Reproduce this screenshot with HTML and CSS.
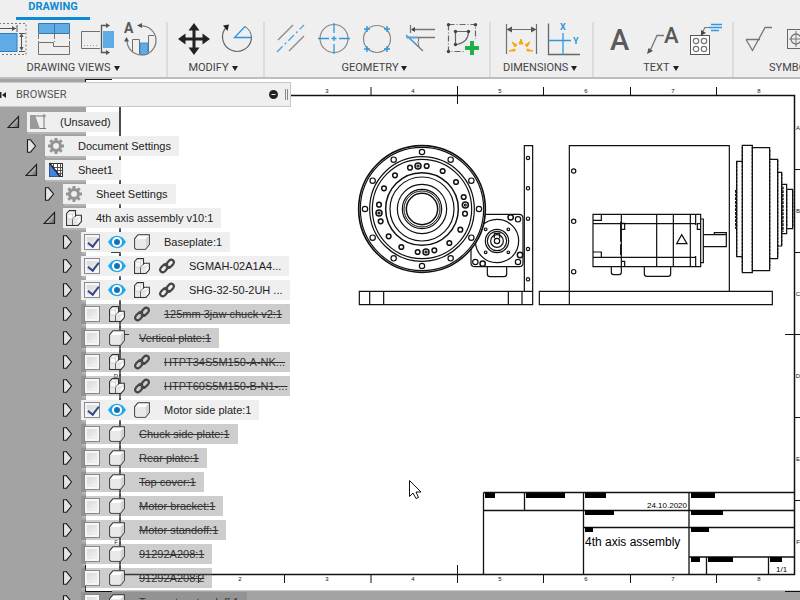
FILE: index.html
```html
<!DOCTYPE html>
<html lang="en">
<head>
<meta charset="utf-8">
<title>4th axis assembly</title>
<link rel="stylesheet" href="styles.css">
</head>
<body>
<svg class="defs" width="0" height="0" aria-hidden="true">
  <defs>
    <linearGradient id="fold" x1="0" y1="0" x2="1" y2="1"><stop offset="0.3" stop-color="#eee"/><stop offset="1" stop-color="#555"/></linearGradient>
    <symbol id="open" viewBox="0 0 14 14"><path d="M11.500 1.500V12.500H1Z" fill="url(#fold)" stroke="#222" stroke-width="1.200"/></symbol>
    <symbol id="closed" viewBox="0 0 14 14"><path d="M2.500 .8H5.500L10.500 7L5.500 13.200H2.500Z" fill="#e4e4e4" stroke="#1a1a1a" stroke-width="1.100"/></symbol>
    <symbol id="body" viewBox="0 0 16 16"><path d="M.7 4.700L4 .7H15.300V10.500L11.500 15.300H2L.7 14Z" fill="#fff" stroke="#333" stroke-width="1.100"/><path d="M1.500 5H11.500V14.600H2L1.500 14Z" fill="#e9e9e9"/><path d="M11.500 5L15 1.300V10.400L11.500 14.800Z" fill="#d0d6d6"/></symbol>
    <symbol id="asm" viewBox="0 0 16 16"><path d="M.6 3.500L3.300 .6H9.500V6L10.500 5.300H15.400V11.500L12 15.400H.6Z" fill="#fbfbfb" stroke="#333" stroke-width="1.100"/><path d="M1.200 9H6V14.800H1.200ZM7 9.500H11.500V14.800H7Z" fill="#e6e6e6"/><path d="M6.500 9V15M6.500 9L9.500 6" fill="none" stroke="#555" stroke-width=".9"/><path d="M1 9H12L15 5.800M6.500 4V9M1 4H6.500L9 1.200" fill="none" stroke="#c4c4c4" stroke-width=".7"/></symbol>
    <symbol id="link" viewBox="0 0 16 16"><g fill="none" stroke="#444" stroke-width="2.200" stroke-linecap="round"><path d="M6.200 7.200L10 2.800Q12 .8 14 2.400Q15.800 4.200 14 6.400L11.500 9Q9.500 10.500 7.800 9"/><path d="M9.800 8.800L6 13.200Q4 15.200 2 13.600Q.2 11.800 2 9.600L4.500 7Q6.500 5.500 8.200 7"/></g></symbol>
    <symbol id="eye" viewBox="0 0 18 14"><path d="M0 7Q4 .8 9 .8T18 7Q14 13.200 9 13.200T0 7Z" fill="#1aa9ea"/><circle cx="9" cy="7" r="5" fill="#fff"/><circle cx="9" cy="7" r="3" fill="#1b6fb8"/></symbol>
    <symbol id="gear" viewBox="0 0 16 16"><circle cx="8" cy="8" r="4.500" fill="none" stroke="#949494" stroke-width="3"/><g stroke="#949494" stroke-width="3"><path d="M8 0V3M8 13V16M0 8H3M13 8H16M2.300 2.300L4.500 4.500M11.500 11.500L13.700 13.700M13.700 2.300L11.500 4.500M4.500 11.500L2.300 13.700"/></g></symbol>
    <symbol id="doc" viewBox="0 0 16 16"><path d="M0 1H5L10 15H0Z" fill="#9a9a9a"/><path d="M5 2H16M14 0V15M10 14.500H16" fill="none" stroke="#777"/></symbol>
    <symbol id="sheet" viewBox="0 0 16 16"><rect x="1.500" y="1.500" width="13" height="13" fill="#fff" stroke="#333"/><path d="M5.500 2V14M9.500 2V14M12.500 2V14M2 5.500H14M2 8.500H14M2 11.500H14" stroke="#555"/><path d="M1.500 1.500L11 14.500H1.500Z" fill="#3f83ea"/><path d="M1.500 1L12 14.500" stroke="#222" stroke-width="1.500"/></symbol>
  </defs>
</svg>

<header class="ribbon">
  <nav class="tabs"><button class="tab">DRAWING</button></nav>
  <div class="groups">
    <section class="group first">
      <div class="tools">
        <button class="tool"><svg viewBox="0 0 32 32"><rect x="-8" y=".5" width="39" height="31" fill="none" stroke="#777" stroke-dasharray="2 2"/><rect x="-4" y="10.500" width="26" height="18" fill="#5fabe6" stroke="#2b7fc0"/><path d="M0 5.500H21M22 2V9M26.500 12V27M24 10.500H30M24 28.500H30" stroke="#555"/><path d="M21 5.500L17 3V8ZM26.500 10L24.500 14H28.500ZM26.500 28L24.500 24H28.500Z" fill="#555"/></svg></button>
        <button class="tool"><svg viewBox="0 0 32 32"><path d="M.5.500H31.500V10.500H.5Z" fill="#5fabe6" stroke="#3a76a6"/><path d="M16.500 0V10" stroke="#3a76a6"/><path d="M.5 11V19M31.500 11V23M16.500 11V19" stroke="#777" stroke-dasharray="5 2"/><path d="M.5 19.500H15.500V23.500H31.500V31.500H.5Z" fill="none" stroke="#707070"/></svg></button>
        <button class="tool"><svg viewBox="0 0 32 32"><path d="M19 8.500H.5V25.500H19" fill="none" stroke="#707070"/><path d="M3 22.500H18" stroke="#999" stroke-dasharray="1 2"/><path d="M26 2.500H20.500V29.500H26" fill="none" stroke="#555" stroke-width="1.300"/><path d="M25 0L29 2.500L25 5ZM25 27L29 29.500L25 32Z" fill="#555"/><rect x="22" y="8" width="11" height="17" fill="#5fabe6"/></svg></button>
        <button class="tool"><svg viewBox="0 0 32 32"><text class="glyph-small" x="0" y="10">A</text><path d="M16 3A14.500 14.500 0 1 1 3 17" fill="none" stroke="#777" stroke-width="1.200"/><path d="M13 2.500L18 0V5ZM2.500 14L0 18.500H5Z" fill="#555"/><path d="M8.500 29V16.500H15.500V31M24.500 29V12.500H30" fill="none" stroke="#707070"/><path d="M16 20H24V31Q20 33 16 31Z" fill="#5fabe6" stroke="#3a76a6" stroke-width=".7"/></svg></button>
      </div>
      <button class="menu">DRAWING VIEWS<i></i></button>
    </section>
    <section class="group">
      <div class="tools">
        <button class="tool"><svg viewBox="0 0 32 32"><path d="M16 3V29M3 16H29" stroke="#222" stroke-width="3"/><path d="M16 0L21.500 7.500H10.500ZM16 32L21.500 24.500H10.500ZM0 16L7.500 10.500V21.500ZM32 16L24.500 10.500V21.500Z" fill="#222"/></svg></button>
        <button class="tool"><svg viewBox="0 0 32 32"><path d="M5 4.500A14.500 14.500 0 1 0 30.500 15" fill="none" stroke="#666" stroke-width="1.200"/><path d="M2 2.500L8 1.500L6.500 8Z" fill="#222"/><path d="M24 3.500L13.500 14.500H30" fill="none" stroke="#2f93dd" stroke-width="1.300"/><path d="M24 3.500A14 14 0 0 1 30.500 15" fill="none" stroke="#666"/></svg></button>
      </div>
      <button class="menu">MODIFY<i></i></button>
    </section>
    <section class="group">
      <div class="tools">
        <button class="tool"><svg viewBox="0 0 32 32"><path d="M3 17L18 2M14 28L29 13" stroke="#8a8a8a" stroke-width="1.400"/><path d="M2 29L29 2" stroke="#4ba6e6" stroke-width="1.400" stroke-dasharray="8 3 2 3"/></svg></button>
        <button class="tool"><svg viewBox="0 0 32 32"><circle cx="16" cy="15.500" r="14" fill="none" stroke="#888" stroke-width="1.200"/><path d="M16 0V10M16 21V31M0 15.500H11M21 15.500H32M16 13V18M13.500 15.500H18.500" stroke="#2f97dd" stroke-width="1.300"/></svg></button>
        <button class="tool"><svg viewBox="0 0 32 32"><circle cx="16" cy="16" r="13.500" fill="none" stroke="#888" stroke-width="1.200"/><path d="M6 3V9M3 6H9M26 3V9M23 6H29M6 23V29M3 26H9M26 23V29M23 26H29" stroke="#2f97dd" stroke-width="1.400"/></svg></button>
        <button class="tool"><svg viewBox="0 0 32 32"><path d="M6.500 2V10M8 6.500H31M3 14.500H31M3 13L19 28" stroke="#777" stroke-width="1.300"/><path d="M7 6.500L11 4V9Z" fill="#444"/><path d="M2 14.500H14M2 12L12 21" stroke="#4ba6e6" stroke-width="1.300"/><path d="M15 15Q13 19 15 24" fill="none" stroke="#777"/></svg></button>
        <button class="tool"><svg viewBox="0 0 32 32"><path d="M1.500 1.500H28.500V16M1.500 1.500V28.500H18" fill="none" stroke="#666" stroke-width="1.200" stroke-dasharray="6 2 1 2"/><path d="M8.500 21V8.500H21.500Q21.500 19 10 21.500" fill="none" stroke="#666" stroke-width="1.200"/><g fill="#444"><circle cx="1.500" cy="1.800" r="1.700"/><circle cx="28.500" cy="1.800" r="1.700"/><circle cx="1.500" cy="28.500" r="1.700"/><circle cx="8.500" cy="8.500" r="1.700"/><circle cx="21.500" cy="8.500" r="1.700"/><circle cx="8.500" cy="21.500" r="1.700"/></g><path d="M25 18V32M18 25H32" stroke="#1eae4b" stroke-width="4"/></svg></button>
      </div>
      <button class="menu">GEOMETRY<i></i></button>
    </section>
    <section class="group wide">
      <div class="tools">
        <button class="tool"><svg viewBox="0 0 32 32"><path d="M1.500 1V31M31.500 1V31M3 6.500H30" stroke="#707070" stroke-width="1.200"/><path d="M1.500 6.500L7 3.500V9.500ZM31.500 6.500L26 3.500V9.500Z" fill="#555"/><path d="M16 16L18 21H14ZM7 19L12 22L10 24ZM25 19L20 22L22 24ZM4 28L10 26V28ZM28 28L22 26V28Z" fill="#fba70c" stroke="#fba70c"/></svg></button>
        <button class="tool"><svg viewBox="0 0 32 32"><path d="M.5.500V31.500H32" fill="none" stroke="#666" stroke-width="1.300"/><path d="M15 10V32M1 17.500H23" stroke="#2f97dd" stroke-width="1.300"/><text class="axis" x="12" y="7">X</text><text class="axis" x="25" y="21">Y</text></svg></button>
      </div>
      <button class="menu">DIMENSIONS<i></i></button>
    </section>
    <section class="group">
      <div class="tools">
        <button class="tool"><svg viewBox="0 0 32 32"><text class="glyph-big" x="6" y="27">A</text></svg></button>
        <button class="tool"><svg viewBox="0 0 32 32"><path d="M3 28L10 12.500H17" fill="none" stroke="#777" stroke-width="1.300"/><path d="M0 31L1.500 25L6 28Z" fill="#555"/><text class="glyph-mid" x="17" y="20">A</text></svg></button>
        <button class="tool"><svg viewBox="0 0 32 32"><rect x=".5" y="12.500" width="19" height="19" fill="#fff" stroke="#555"/><g fill="none" stroke="#777" stroke-width="1.200"><circle cx="6" cy="18" r="2.700"/><circle cx="14" cy="18" r="2.700"/><circle cx="6" cy="26" r="2.700"/><circle cx="14" cy="26" r="2.700"/><path d="M12 10L15 4.500H19"/></g><path d="M11 12.500V7L16 10Z" fill="#444"/><path d="M21 1.500H32M19 4.500H32M21 7.500H29" stroke="#2f97dd" stroke-width="1.300"/></svg></button>
      </div>
      <button class="menu">TEXT<i></i></button>
    </section>
    <section class="group last">
      <div class="tools">
        <button class="tool"><svg viewBox="0 0 32 32"><path d="M2 16.500H16M2 16.500L8.500 27.500L21 4.500H28" fill="none" stroke="#777" stroke-width="1.300"/></svg></button>
        <button class="tool"><svg viewBox="0 0 32 32"><rect x=".5" y="6.500" width="31" height="19" fill="none" stroke="#666"/><circle cx="9" cy="16" r="5" fill="none" stroke="#777" stroke-width="1.300"/><path d="M9 8V24M2 16H16M17.500 7V25" stroke="#777"/></svg></button>
        <button class="tool"><svg viewBox="0 0 32 32"><path d="M4 28V6H28" fill="none" stroke="#777" stroke-width="1.300"/></svg></button>
      </div>
      <button class="menu">SYMBOLS<i></i></button>
    </section>
  </div>
</header>

<main class="workspace">
  <svg class="sheet" width="800" height="521" viewBox="0 79 800 521">
    <rect x="86" y="79" width="714" height="512" fill="#fff"/>
    <path d="M85.500 79V83M85.500 565V591.500H112" class="ln"/>
    <path d="M86 79.500H112M785 591.500H800" class="ln"/>
    <path d="M112 590.500H800" stroke="#ccc"/>
    <path class="frame" d="M120 95.500H794.500V574.500H120Z"/>
    <path class="ln" d="M198.500 87V95M284.500 87V95M371 87V95M457.500 86V104M543.500 87V95M630.500 87V95M716.500 87V95M198.500 575V583M284.500 575V583M371 575V583M457.500 565V583M543.500 575V583M630.500 575V583M716.500 575V583M795 169.500H800M795 252.500H800M785 334.500H800M795 417.500H800M795 500.500H800M111 252.500H120M120 334.500H129M111 169.500H120M111 417.500H120M111 500.500H120"/>
    <g class="zone">
      <text x="327" y="93">3</text><text x="413" y="93">4</text><text x="500" y="93">5</text><text x="586" y="93">6</text><text x="673" y="93">7</text><text x="759" y="93">8</text>
      <text x="240" y="581">2</text><text x="327" y="581">3</text><text x="413" y="581">4</text><text x="500" y="581">5</text><text x="586" y="581">6</text><text x="673" y="581">7</text><text x="759" y="581">8</text>
      <text x="798" y="130">A</text><text x="798" y="213">B</text><text x="798" y="296">C</text><text x="798" y="378">D</text><text x="798" y="461">E</text><text x="798" y="544">F</text>
      <text x="116" y="378">D</text><text x="116" y="544">F</text>
    </g>

    <g class="view" transform="translate(345 130) scale(.33333)">
      <path d="M420 253H522Q534 253 534 265V398Q534 410 522 410H390Q378 410 378 398V345M427 410V432Q427 440 435 440H477Q485 440 485 432V410"/>
      <circle cx="456" cy="333" r="65"/><circle cx="456" cy="333" r="35"/><circle cx="456" cy="333" r="29"/><circle cx="456" cy="333" r="19"/><circle cx="456" cy="333" r="8"/><path d="M448 325V310H464V325"/>
      <circle cx="422" cy="298" r="4"/><circle cx="490" cy="298" r="4"/><circle cx="422" cy="367" r="4"/><circle cx="490" cy="367" r="4"/>
      <circle cx="519" cy="268" r="8"/><circle cx="519" cy="396" r="8"/><circle cx="391" cy="396" r="8"/>
      <g class="bold"><circle cx="497" cy="262" r="8"/><circle cx="525" cy="375" r="8"/><circle cx="413" cy="401" r="8"/></g>
      <circle cx="231" cy="237" r="190" class="disc"/>
      <circle cx="231" cy="237" r="185"/><circle cx="231" cy="237" r="157"/><circle cx="231" cy="237" r="149"/><circle cx="231" cy="237" r="96"/><circle cx="231" cy="237" r="74"/><circle cx="231" cy="237" r="59"/>
      <g class="bold"><circle cx="231" cy="237" r="109"/><circle cx="231" cy="237" r="54" stroke-width="3"/><circle cx="231" cy="237" r="47"/></g>
      <g><circle cx="231" cy="66" r="8"/><circle cx="317" cy="89" r="8"/><circle cx="379" cy="152" r="8"/><circle cx="402" cy="237" r="8"/><circle cx="379" cy="323" r="8"/><circle cx="317" cy="385" r="8"/><circle cx="231" cy="408" r="8"/><circle cx="146" cy="385" r="8"/><circle cx="83" cy="323" r="8"/><circle cx="60" cy="237" r="8"/><circle cx="83" cy="152" r="8"/><circle cx="146" cy="89" r="8"/></g>
      <g class="bold"><circle cx="195" cy="113" r="7"/><circle cx="245" cy="108" r="7"/><circle cx="293" cy="123" r="7"/><circle cx="333" cy="156" r="7"/><circle cx="356" cy="201" r="7"/><circle cx="360" cy="251" r="7"/><circle cx="346" cy="299" r="7"/><circle cx="313" cy="339" r="7"/><circle cx="268" cy="361" r="7"/><circle cx="218" cy="366" r="7"/><circle cx="169" cy="351" r="7"/><circle cx="131" cy="319" r="7"/><circle cx="107" cy="274" r="7"/><circle cx="102" cy="224" r="7"/><circle cx="117" cy="175" r="7"/><circle cx="150" cy="136" r="7"/>
        <circle cx="219" cy="108" r="9"/><circle cx="361" cy="225" r="9"/><circle cx="243" cy="366" r="9"/><circle cx="102" cy="249" r="9"/></g>
      <circle cx="219" cy="108" r="3"/><circle cx="361" cy="225" r="3"/><circle cx="243" cy="366" r="3"/><circle cx="102" cy="249" r="3"/>
      <path d="M538 484V47H563V524H43V484H563M74 484V524M116 484V524M490 484V524M531 484V524"/>
      <circle cx="549" cy="84" r="5"/><circle cx="549" cy="175" r="5"/><circle cx="549" cy="266" r="5"/><circle cx="549" cy="357" r="5"/><circle cx="549" cy="448" r="5"/>
    </g>

    <g class="view" transform="translate(530 130) scale(.33333)">
      <path d="M118 524V47H598V484M28 484H727V524H28Z"/>
      <circle cx="131" cy="123" r="6.500"/><circle cx="131" cy="274" r="6.500"/><circle cx="131" cy="425" r="6.500"/>
      <path d="M189 253H512V410H189ZM189 281H497M189 382H497M274 253V410M380 253V410M430 253V410M481 253V410M497 253V285M497 378V410M189 271H214V254M214 382V366H189M274 280H284V298H274M274 394H284V410M512 281H502V298H512M512 267H520V398H512M520 314H589V350H520M553 314V308H589V314"/>
      <path d="M272 275V375" stroke-dasharray="60 8"/>
      <path d="M455 314L471 341H440ZM244 410V427Q244 434 251 434H267Q274 434 274 427V410M343 410V431Q343 439 351 439H414Q422 439 422 431V410"/>
      <path d="M637 46H667V428H637ZM667 53H719V422H667M719 88H743V386H719M637 94H620V380H637M743 127H755V348H743M757 163H770V311H757M770 178H788V296H770"/>
      <g class="knurl"><path d="M667 50V425M637 50V425M719 60V415M743 90V380M620 96V376M617 180V296M755 130V345M759 170V306M770 182V290M788 182V290"/></g>
    </g>

    <g class="block">
      <path d="M483.500 492.500H794M483.500 492.500V574M483.500 510.500H794M524.500 493V510M583.500 493V574M689 493V574M583.500 527.500H794M689 557H794M706.500 557V574M768.500 557V574"/>
      <path class="redact" d="M485 493h10v5h-10zM526 493h39v5h-39zM585 493h21v5h-21zM691 493h24v5h-24zM585 510h29v5h-29zM691 510h32v5h-32zM585 527h8v5h-8zM691 527h18v5h-18zM691 557h9v5h-9zM708 557h25v5h-25zM770 557h12v5h-12z"/>
      <text class="date" x="687" y="508" text-anchor="end">24.10.2020</text>
      <text class="name" x="585" y="546">4th axis assembly</text>
      <text class="date" x="776" y="572">1/1</text>
    </g>
    <path d="M409.500 480.500V496.500L413 493L416 498.500L418.500 497.500L416 492H421Z" fill="#fff" stroke="#111"/>
  </svg>

  <aside class="browser">
    <div class="head"><svg class="rewind" viewBox="0 0 8 8"><path d="M.7 1V7" stroke="#222" stroke-width="1.500"/><path d="M6 1V7L2 4Z" fill="#222"/></svg><h2>BROWSER</h2><button class="collapse"></button><span class="grip"></span></div>
    <ul class="tree">
      <li class="l0"><button class="twist"><svg><use href="#open"/></svg></button><div class="pill"><svg><use href="#doc"/></svg><span>(Unsaved)</span></div></li>
      <li class="l1"><button class="twist"><svg><use href="#closed"/></svg></button><div class="pill"><svg><use href="#gear"/></svg><span>Document Settings</span></div></li>
      <li class="l1"><button class="twist"><svg><use href="#open"/></svg></button><div class="pill"><svg><use href="#sheet"/></svg><span>Sheet1</span></div></li>
      <li class="l2"><button class="twist"><svg><use href="#closed"/></svg></button><div class="pill"><svg><use href="#gear"/></svg><span>Sheet Settings</span></div></li>
      <li class="l2"><button class="twist"><svg><use href="#open"/></svg></button><div class="pill"><svg><use href="#asm"/></svg><span>4th axis assembly v10:1</span></div></li>
      <li class="l3"><button class="twist"><svg><use href="#closed"/></svg></button><div class="pill"><input type="checkbox" id="c1" checked><svg class="eye"><use href="#eye"/></svg><svg><use href="#body"/></svg><label for="c1">Baseplate:1</label></div></li>
      <li class="l3"><button class="twist"><svg><use href="#closed"/></svg></button><div class="pill"><input type="checkbox" id="c2" checked><svg class="eye"><use href="#eye"/></svg><svg><use href="#asm"/></svg><svg><use href="#link"/></svg><label for="c2">SGMAH-02A1A4...</label></div></li>
      <li class="l3"><button class="twist"><svg><use href="#closed"/></svg></button><div class="pill"><input type="checkbox" id="c3" checked><svg class="eye"><use href="#eye"/></svg><svg><use href="#asm"/></svg><svg><use href="#link"/></svg><label for="c3">SHG-32-50-2UH ...</label></div></li>
      <li class="l3 off"><button class="twist"><svg><use href="#closed"/></svg></button><div class="pill"><input type="checkbox" id="c4"><svg><use href="#asm"/></svg><svg><use href="#link"/></svg><label for="c4">125mm 3jaw chuck v2:1</label></div></li>
      <li class="l3 off"><button class="twist"><svg><use href="#closed"/></svg></button><div class="pill"><input type="checkbox" id="c5"><svg><use href="#body"/></svg><label for="c5">Vertical plate:1</label></div></li>
      <li class="l3 off"><button class="twist"><svg><use href="#closed"/></svg></button><div class="pill"><input type="checkbox" id="c6"><svg><use href="#asm"/></svg><svg><use href="#link"/></svg><label for="c6">HTPT34S5M150-A-NK...</label></div></li>
      <li class="l3 off"><button class="twist"><svg><use href="#closed"/></svg></button><div class="pill"><input type="checkbox" id="c7"><svg><use href="#asm"/></svg><svg><use href="#link"/></svg><label for="c7">HTPT60S5M150-B-N1-...</label></div></li>
      <li class="l3"><button class="twist"><svg><use href="#closed"/></svg></button><div class="pill"><input type="checkbox" id="c8" checked><svg class="eye"><use href="#eye"/></svg><svg><use href="#body"/></svg><label for="c8">Motor side plate:1</label></div></li>
      <li class="l3 off"><button class="twist"><svg><use href="#closed"/></svg></button><div class="pill"><input type="checkbox" id="c9"><svg><use href="#body"/></svg><label for="c9">Chuck side plate:1</label></div></li>
      <li class="l3 off"><button class="twist"><svg><use href="#closed"/></svg></button><div class="pill"><input type="checkbox" id="c10"><svg><use href="#body"/></svg><label for="c10">Rear plate:1</label></div></li>
      <li class="l3 off"><button class="twist"><svg><use href="#closed"/></svg></button><div class="pill"><input type="checkbox" id="c11"><svg><use href="#body"/></svg><label for="c11">Top cover:1</label></div></li>
      <li class="l3 off"><button class="twist"><svg><use href="#closed"/></svg></button><div class="pill"><input type="checkbox" id="c12"><svg><use href="#body"/></svg><label for="c12">Motor bracket:1</label></div></li>
      <li class="l3 off"><button class="twist"><svg><use href="#closed"/></svg></button><div class="pill"><input type="checkbox" id="c13"><svg><use href="#body"/></svg><label for="c13">Motor standoff:1</label></div></li>
      <li class="l3 off"><button class="twist"><svg><use href="#closed"/></svg></button><div class="pill"><input type="checkbox" id="c14"><svg><use href="#body"/></svg><label for="c14">91292A208:1</label></div></li>
      <li class="l3 off"><button class="twist"><svg><use href="#closed"/></svg></button><div class="pill"><input type="checkbox" id="c15"><svg><use href="#body"/></svg><label for="c15">91292A208:2</label></div></li>
      <li class="l3 off"><button class="twist"><svg><use href="#closed"/></svg></button><div class="pill"><input type="checkbox" id="c16"><svg><use href="#body"/></svg><label for="c16">Top motor standoff:1</label></div></li>
    </ul>
  </aside>
</main>
</body>
</html>
```
FILE: styles.css
```css
* { box-sizing: border-box; }
body {
  margin: 0;
  height: 100vh;
  display: flex;
  flex-direction: column;
  overflow: hidden;
  background: #a3a3a3;
  color: #222;
  font: 11px/20px "Liberation Sans", Arial, sans-serif;
}
button { padding: 0; border: 0; background: none; color: inherit; font: inherit; }
svg { display: block; overflow: visible; }
.defs { position: absolute; }

/* Ribbon */
.ribbon {
  flex: none;
  background: #efefef;
  border-bottom: 2px solid #bdbdbd;
  overflow: hidden;
  font-family: Roboto, "Liberation Sans", sans-serif;
}
.tabs { display: flex; padding-left: 16px; }
.tab {
  width: 74px;
  height: 20px;
  padding-bottom: 4px;
  border-bottom: 3px solid #0d8ad4;
  color: #0d8ad4;
  font-size: 11px;
  font-weight: 700;
  line-height: 14px;
}
.groups { display: flex; margin: 2px 0 0 -17px; }
.group {
  flex: none;
  display: flex;
  flex-direction: column;
  align-items: center;
  padding: 1px 10px 0;
  border-left: 2px solid #dcdcdc;
}
.group.wide { padding: 1px 10px 0 12px; }
.group.last { padding: 1px 8px 0 10px; }
.tools { display: flex; gap: 11px; }
.tool, .tool svg { width: 32px; height: 32px; }
.menu {
  display: flex;
  align-items: center;
  gap: 3px;
  margin-top: 4px;
  padding-right: 5px;
  color: #444;
  font-size: 11px;
  line-height: 18px;
  white-space: nowrap;
}
.menu i {
  border: 3px solid transparent;
  border-top: 5px solid #222;
  border-bottom: 0;
}
.last .menu { padding-right: 10px; }
.glyph-small, .glyph-mid, .glyph-big { fill: #5a5a5a; font-family: Roboto, sans-serif; font-weight: 700; }
.glyph-small { font-size: 14px; }
.glyph-mid { font-size: 22px; font-weight: 500; }
.glyph-big { font-size: 29px; font-weight: 500; }
.axis { fill: #2f97dd; font: 700 9px Roboto, sans-serif; }

/* Drawing sheet */
.workspace { position: relative; flex: 1; min-height: 0; }
.sheet { position: absolute; top: 0; left: 0; }
.ln, .frame, .block path { fill: none; stroke: #111; stroke-width: 1; }
.frame { stroke-width: 1.5px; }
.zone { font-size: 6px; text-anchor: middle; fill: #111; }
.view { fill: none; stroke: #111; stroke-width: 3.6px; }
.view .bold { stroke-width: 4.5px; }
.view .disc { fill: #fff; stroke-width: 5px; }
.view .knurl { stroke-dasharray: 8 3; stroke-width: 4px; }
.block path { stroke-width: 1.3px; }
.block .redact { fill: #000; stroke: none; }
.date { font-size: 8px; }
.name { font-size: 12px; fill: #000; }

/* Browser panel */
.browser { position: relative; width: 291px; padding-top: 3px; }
.head {
  display: flex;
  align-items: center;
  height: 25px;
  padding-right: 2px;
  background: #efefef;
  border: 1px solid #c8c8c8;
  border-left: 0;
}
.rewind { width: 8px; height: 8px; margin-right: 8px; }
.head h2 { flex: 1; margin: 0; color: #555; font: 400 11px/20px Roboto, "Liberation Sans", sans-serif; }
.collapse {
  width: 9px;
  height: 9px;
  margin-right: 7px;
  border: 4px solid #222;
  border-left-width: 2px;
  border-right-width: 2px;
  border-radius: 50%;
  background: #fff;
}
.grip { width: 3px; height: 11px; border: 1px solid #888; border-width: 0 1px; }
.tree { margin: 0; padding: 3px 0 0; list-style: none; }
.tree li { display: flex; align-items: center; height: 24px; }
.l0 { padding-left: 7px; }
.l1 { padding-left: 25px; }
.l2 { padding-left: 43px; }
.l3 { padding-left: 61px; }
.twist { flex: none; width: 20px; }
.twist svg { width: 14px; height: 14px; }
.pill {
  display: flex;
  align-items: center;
  gap: 9px;
  max-width: 209px;
  height: 20px;
  padding: 0 8px 0 3px;
  background: #efefef;
  box-shadow: 0 3px 0 -1px rgba(255, 255, 255, .2);
  white-space: nowrap;
}
.pill svg, .pill input { flex: none; }
.pill svg { width: 16px; height: 16px; }
.pill .eye { width: 18px; height: 14px; margin: 0 -1px; }
.pill span, .pill label { margin-left: 5px; }
.off .pill { background: rgba(120, 120, 120, .37); }
.off label { color: #333; text-decoration: line-through; }
.pill input {
  appearance: none;
  position: relative;
  width: 16px;
  height: 16px;
  margin: 0;
  border: 1px solid #8b8792;
  background: linear-gradient(135deg, #d4d4d4, #f8f8f8);
  box-shadow: inset 0 0 0 2px #f6f6f6;
}
.pill input:checked::after {
  content: "";
  position: absolute;
  top: 1px;
  left: 5px;
  width: 5px;
  height: 9px;
  border: solid #3c4484;
  border-width: 0 2px 2px 0;
  transform: rotate(38deg);
}
```
